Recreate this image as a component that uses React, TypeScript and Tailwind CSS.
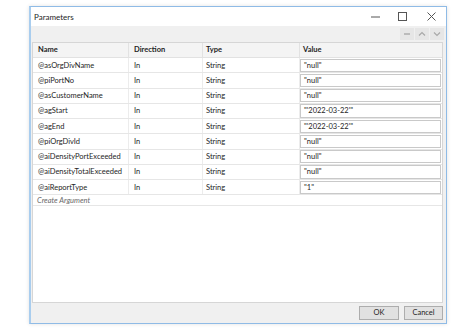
import React from "react";

const rows = [
  { name: "@asOrgDivName", value: "\"null\"" },
  { name: "@piPortNo", value: "\"null\"" },
  { name: "@asCustomerName", value: "\"null\"" },
  { name: "@agStart", value: "\"'2022-03-22'\"" },
  { name: "@agEnd", value: "\"'2022-03-22'\"" },
  { name: "@piOrgDivId", value: "\"null\"" },
  { name: "@aiDensityPortExceeded", value: "\"null\"" },
  { name: "@aiDensityTotalExceeded", value: "\"null\"" },
  { name: "@aiReportType", value: "\"1\"" },
];

const cols = "grid grid-cols-[96px_74px_97px_1fr]";

const App: React.FC = () => {
  return (
    <div
      className="w-[474px] h-[330px] bg-white pt-[6px] pl-[29px] text-[#1e1e1e]"
      style={{ fontFamily: 'Lato, "Noto Sans", sans-serif' }}
    >
      <div className="w-[418px] h-[318px] flex flex-col border border-[#8fbbe6] border-l-2 border-l-[#a9cdee] bg-[#f0f0f0] shadow-[0_0_4px_rgba(0,0,0,0.12)]">
        {/* title bar */}
        <div className="h-[19px] shrink-0 bg-white flex items-center">
          <span className="pl-[3px] text-[8px] leading-none">Parameters</span>
          <div className="ml-auto flex items-center h-full">
            <div className="w-[26px] flex justify-center">
              <svg width="9" height="9" viewBox="0 0 9 9">
                <path d="M0 5h9" stroke="#555" strokeWidth="1" />
              </svg>
            </div>
            <div className="w-[28px] flex justify-center">
              <svg width="9" height="9" viewBox="0 0 9 9">
                <rect x="0.5" y="0.5" width="8" height="8" fill="none" stroke="#555" strokeWidth="1" />
              </svg>
            </div>
            <div className="w-[30px] flex justify-center">
              <svg width="9" height="9" viewBox="0 0 9 9">
                <path d="M0.5 0.5l8 8M8.5 0.5l-8 8" stroke="#555" strokeWidth="1" />
              </svg>
            </div>
          </div>
        </div>

        {/* toolbar */}
        <div className="h-[16px] shrink-0 flex justify-end items-center pr-[2px] gap-[1px]">
          <div className="w-[14px] h-[12px] bg-[#e6e6e6] flex items-center justify-center">
            <svg width="8" height="8" viewBox="0 0 8 8">
              <path d="M1 4h6" stroke="#a8a8a8" strokeWidth="1.4" />
            </svg>
          </div>
          <div className="w-[14px] h-[12px] bg-[#e6e6e6] flex items-center justify-center">
            <svg width="8" height="8" viewBox="0 0 8 8">
              <path d="M1 5.5l3-3 3 3" fill="none" stroke="#a8a8a8" strokeWidth="1.2" />
            </svg>
          </div>
          <div className="w-[14px] h-[12px] bg-[#e6e6e6] flex items-center justify-center">
            <svg width="8" height="8" viewBox="0 0 8 8">
              <path d="M1 2.5l3 3 3-3" fill="none" stroke="#a8a8a8" strokeWidth="1.2" />
            </svg>
          </div>
        </div>

        {/* table */}
        <div className="mx-[1px] mr-[3px] flex-1 bg-white border border-[#d6d6d6] text-[7.5px]">
          <div className={`${cols} h-[15px] bg-[#f4f4f4] border-b border-[#e2e2e2] font-bold`}>
            <div className="pl-[5px] flex items-center border-r border-[#e2e2e2]">Name</div>
            <div className="pl-[5px] flex items-center border-r border-[#e2e2e2]">Direction</div>
            <div className="pl-[3px] flex items-center border-r border-[#e2e2e2]">Type</div>
            <div className="pl-[3px] flex items-center">Value</div>
          </div>
          {rows.map((r) => (
            <div key={r.name} className={`${cols} h-[15.25px] border-b border-[#e6e6e6]`}>
              <div className="pl-[5px] flex items-center border-r border-[#ececec] whitespace-nowrap">
                {r.name}
              </div>
              <div className="pl-[5px] flex items-center border-r border-[#ececec]">In</div>
              <div className="pl-[3px] flex items-center border-r border-[#ececec]">String</div>
              <div className="pr-[1px] py-[0.5px] flex">
                <div className="flex-1 flex items-center pl-[3px] border border-[#c9c9c9] bg-white">
                  {r.value}
                </div>
              </div>
            </div>
          ))}
          <div className="h-[11px] pl-[4px] flex items-center border-b border-[#e6e6e6] italic text-[#6a6a6a]">
            Create Argument
          </div>
        </div>

        {/* footer */}
        <div className="h-[20px] shrink-0 flex justify-end items-center gap-[5px] pr-[3px]">
          <button className="w-[40px] h-[14px] bg-[#e1e1e1] border border-[#adadad] text-[7.5px] leading-none">
            OK
          </button>
          <button className="w-[39px] h-[14px] bg-[#e1e1e1] border border-[#adadad] text-[7.5px] leading-none">
            Cancel
          </button>
        </div>
      </div>
    </div>
  );
};

export default App;
